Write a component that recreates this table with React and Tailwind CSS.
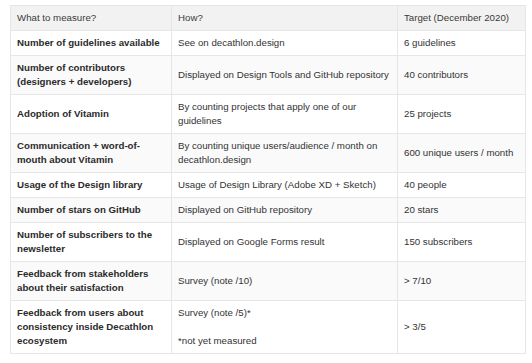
import React from "react";

const rows = [
  {
    what: "Number of guidelines available",
    how: ["See on decathlon.design"],
    target: "6 guidelines",
  },
  {
    what: "Number of contributors (designers + developers)",
    how: ["Displayed on Design Tools and GitHub repository"],
    target: "40 contributors",
  },
  {
    what: "Adoption of Vitamin",
    how: ["By counting projects that apply one of our guidelines"],
    target: "25 projects",
  },
  {
    what: "Communication + word-of-mouth about Vitamin",
    how: ["By counting unique users/audience / month on decathlon.design"],
    target: "600 unique users / month",
  },
  {
    what: "Usage of the Design library",
    how: ["Usage of Design Library (Adobe XD + Sketch)"],
    target: "40 people",
  },
  {
    what: "Number of stars on GitHub",
    how: ["Displayed on GitHub repository"],
    target: "20 stars",
  },
  {
    what: "Number of subscribers to the newsletter",
    how: ["Displayed on Google Forms result"],
    target: "150 subscribers",
  },
  {
    what: "Feedback from stakeholders about their satisfaction",
    how: ["Survey (note /10)"],
    target: "> 7/10",
  },
  {
    what: "Feedback from users about consistency inside Decathlon ecosystem",
    how: ["Survey (note /5)*", "", "*not yet measured"],
    target: "> 3/5",
  },
];

const cell = "border border-[#e6e6e6] px-[6px] py-[5px] align-middle";

const App = () => {
  return (
    <div className="w-[532px] h-[363px] bg-white pt-[5px] pl-[10px] font-['Liberation_Sans',Arial,sans-serif] text-[9.7px] leading-[14px] text-[#333]">
      <table className="w-[515px] border-collapse table-fixed">
        <colgroup>
          <col className="w-[161px]" />
          <col className="w-[226px]" />
          <col className="w-[128px]" />
        </colgroup>
        <thead>
          <tr className="bg-[#f2f2f2] text-[#3a3a3a]">
            <th className={`${cell} text-left font-normal`}>What to measure?</th>
            <th className={`${cell} text-left font-normal`}>How?</th>
            <th className={`${cell} text-left font-normal`}>Target (December 2020)</th>
          </tr>
        </thead>
        <tbody>
          {rows.map((r, i) => (
            <tr key={i} className={i % 2 === 1 ? "bg-[#fafafa]" : "bg-white"}>
              <td className={`${cell} font-bold text-[#2b2b2b]`}>{r.what}</td>
              <td className={cell}>
                {r.how.map((line, j) => (
                  <div key={j} className="min-h-[14px]">
                    {line}
                  </div>
                ))}
              </td>
              <td className={cell}>{r.target}</td>
            </tr>
          ))}
        </tbody>
      </table>
    </div>
  );
};

export default App;
